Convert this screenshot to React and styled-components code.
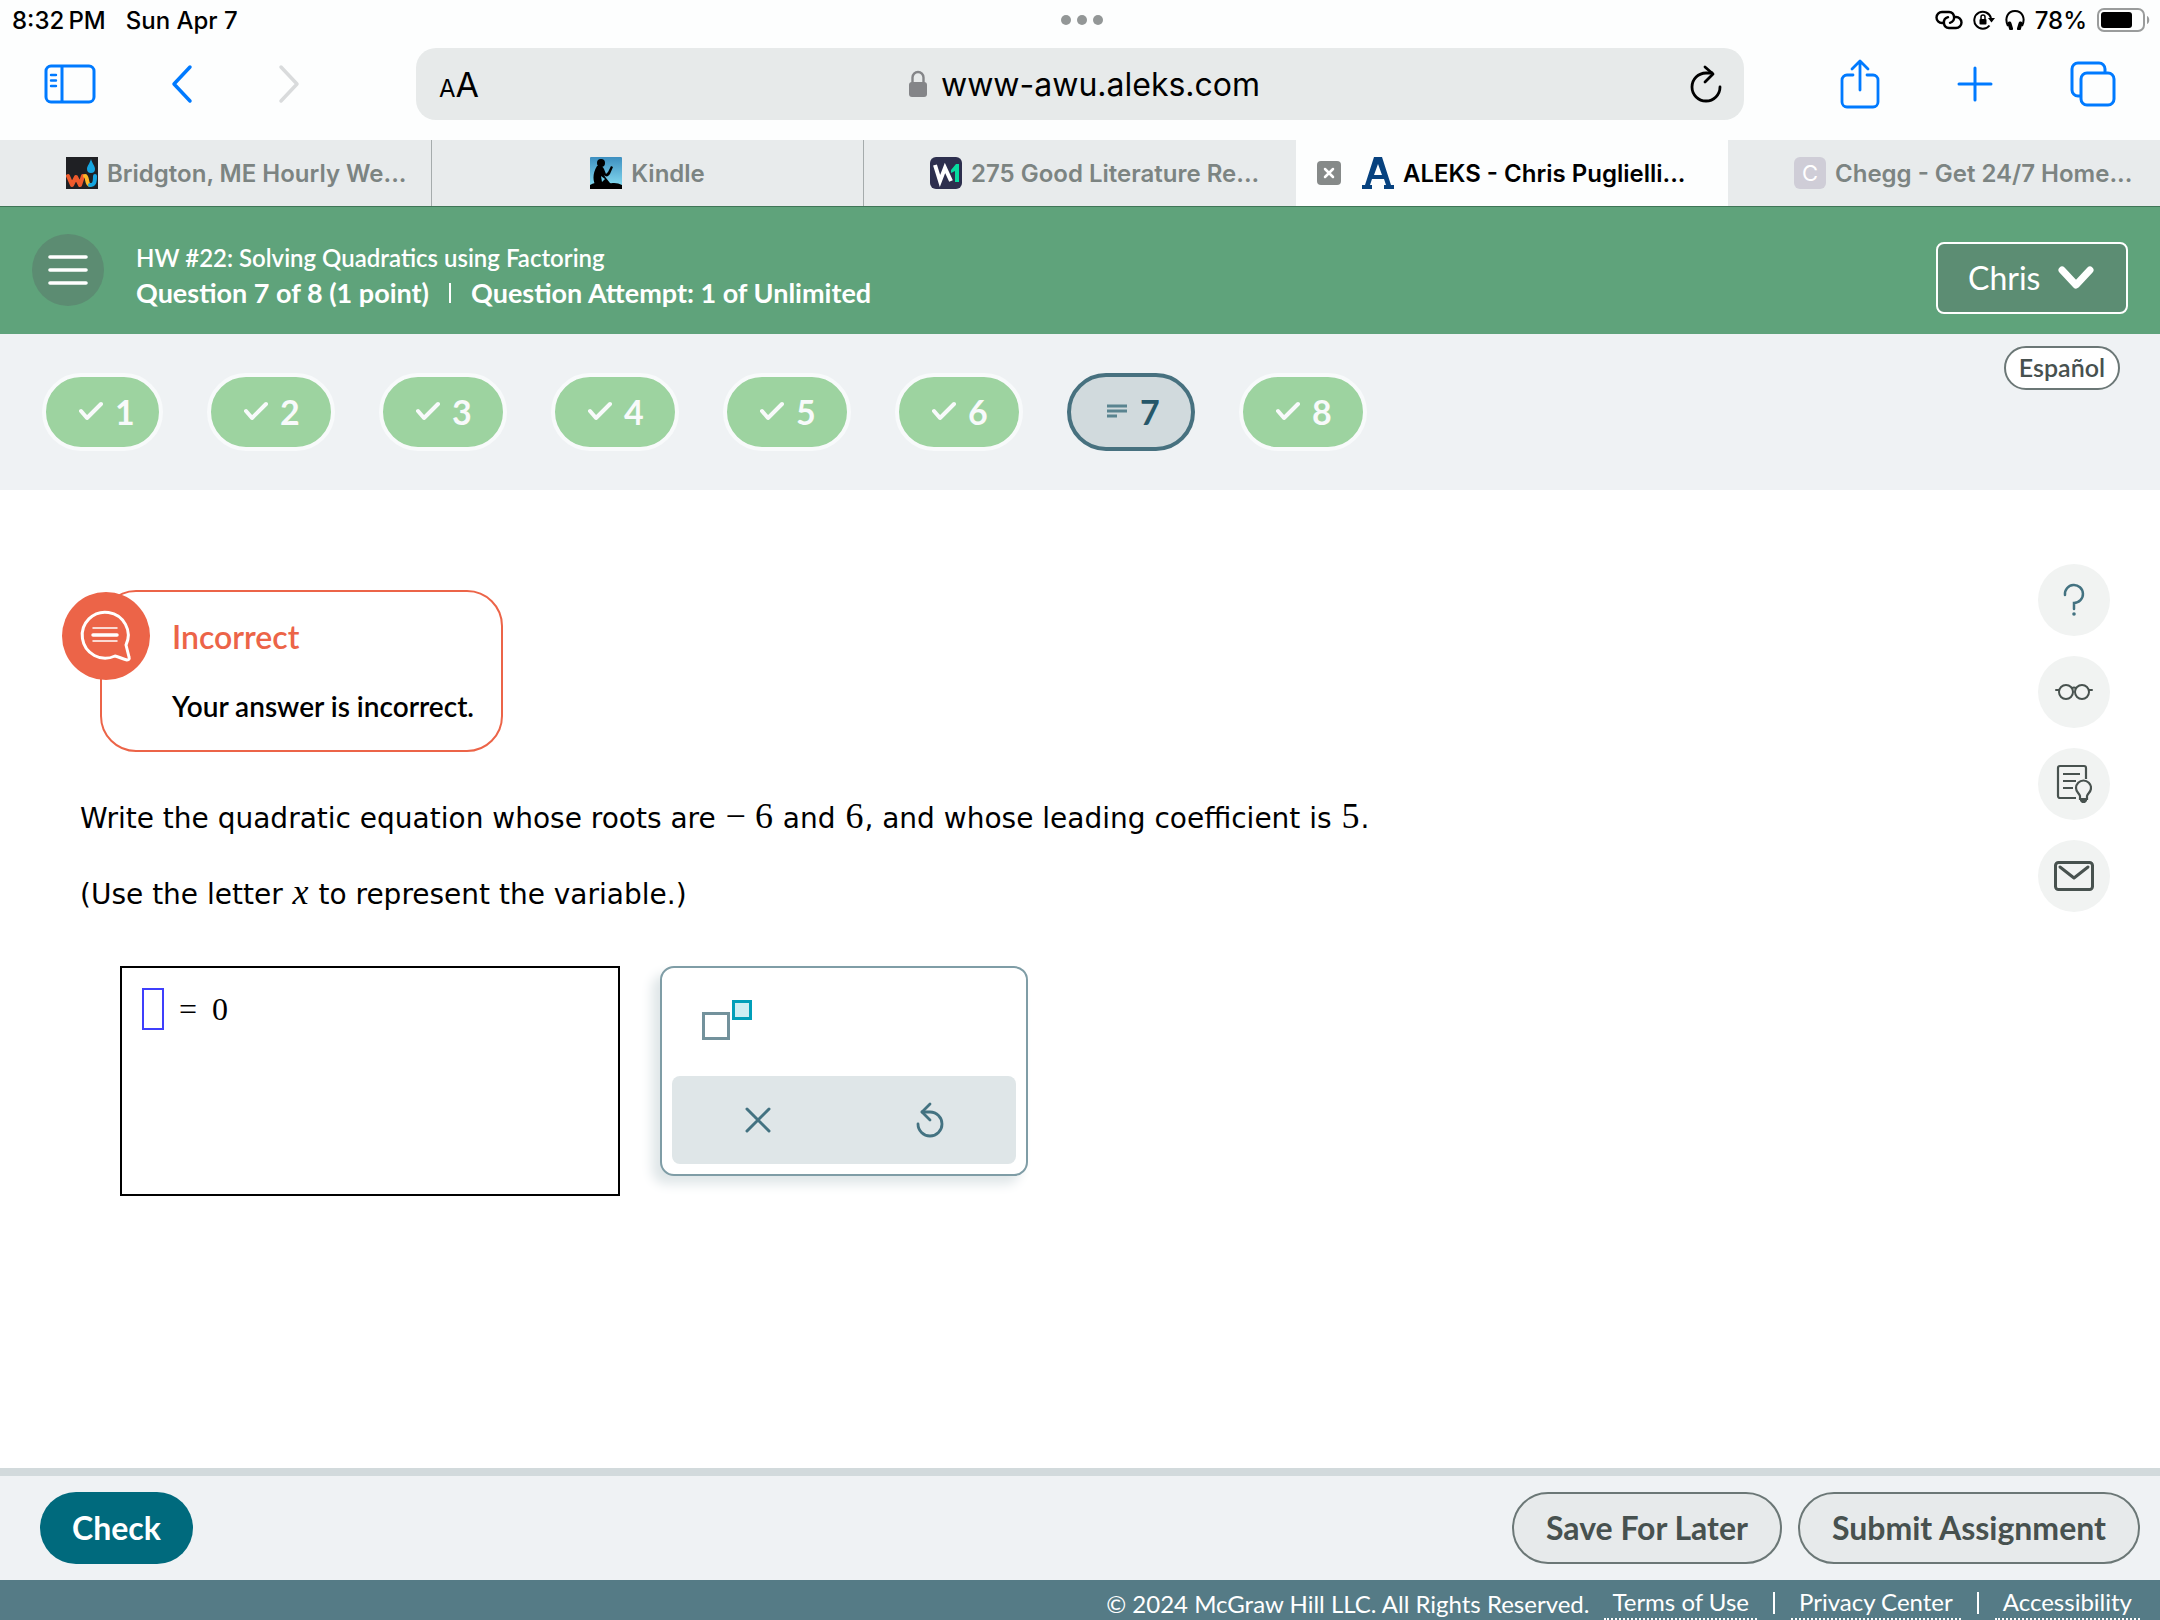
import { useState } from "react";
import styled, { createGlobalStyle, css } from "styled-components";

const questions = [1, 2, 3, 4, 5, 6, 7, 8];

const WeatherIcon = () => (
  <Favicon viewBox="0 0 32 32">
    <rect width="32" height="32" fill="#1f2024" />
    <path d="M25 2c1 4 4 7 4 10a4 4 0 0 1-8 0c0-3 3-6 4-10z" fill="#15a5e0" />
    <path d="M2 19l4 9 4-8 4 8 3-9" fill="none" stroke="#ee5a2c" strokeWidth="4" strokeLinejoin="round" strokeLinecap="round" />
    <path d="M19 19c3 0 1 9 5 9" fill="none" stroke="#fdb827" strokeWidth="4" strokeLinecap="round" />
    <path d="M24 28c4 0 5-2 5-9" fill="none" stroke="#15a5e0" strokeWidth="4" strokeLinecap="round" />
  </Favicon>
);

const KindleIcon = () => (
  <Favicon viewBox="0 0 32 32">
    <defs>
      <linearGradient id="sky" x1="0" y1="0" x2="0" y2="1">
        <stop offset="0" stopColor="#3d8fc0" />
        <stop offset="1" stopColor="#8ce2f5" />
      </linearGradient>
    </defs>
    <rect width="32" height="32" rx="1" fill="url(#sky)" />
    <path d="M0 32v-4c6-3 12-3 18-1 6-2 10-1 14 1v4z" fill="#000" />
    <circle cx="11" cy="6" r="4" fill="#000" />
    <path d="M7 9c3-1 6 0 7 3l2 5 2-2 3-6 2 1-3 7c-2 3-4 3-6 1l2 3 4 5 4 3H6c-3-4-4-12 1-20z" fill="#000" />
    <path d="M11 19l1 6 3-3z" fill="#6ccbe8" />
  </Favicon>
);

const WritersIcon = () => (
  <Favicon viewBox="0 0 32 32">
    <rect width="32" height="32" rx="6" fill="#2d2f4e" />
    <path d="M5 8l5 16 5-13 6 13" fill="none" stroke="#fff" strokeWidth="4" />
    <path d="M29 7v18h-4V14l-4 2v-3l5-6z" fill="#07dca0" />
  </Favicon>
);

const AleksIcon = () => (
  <Favicon viewBox="0 0 32 32">
    <path d="M12 0h8l9 28h3v4H22v-4h2l-2-6H10l-2 6h2v4H0v-4h3zM16 7l-4 11h8z" fill="#07427f" />
  </Favicon>
);

const tabs = [
  { title: "Bridgton, ME Hourly We...", icon: <WeatherIcon /> },
  { title: "Kindle", icon: <KindleIcon />, centered: true },
  { title: "275 Good Literature Re...", icon: <WritersIcon /> },
  { title: "ALEKS - Chris Puglielli...", icon: <AleksIcon />, active: true },
  { title: "Chegg - Get 24/7 Home...", letter: "C" },
];

const StatusBar = () => (
  <Status>
    <StatusGroup>
      <span>8:32{"\u2009"}PM</span>
      <span>Sun Apr 7</span>
    </StatusGroup>
    <Dots>
      <i />
      <i />
      <i />
    </Dots>
    <StatusIcons>
      <svg width="28" height="20" viewBox="0 0 28 20" fill="none" stroke="#000" strokeWidth="2.4" strokeLinecap="round">
        <path d="M8 13H7a5.500 5.500 0 0 1 0-11h7a5.500 5.500 0 0 1 1 10.800" />
        <path d="M20 7h1a5.500 5.500 0 0 1 0 11h-7a5.500 5.500 0 0 1-1-10.800" />
      </svg>
      <svg width="22" height="20" viewBox="0 0 22 20" fill="none">
        <path d="M16.500 15.500A8.500 8.500 0 1 1 18 8" stroke="#000" strokeWidth="2" />
        <path d="M15 8h7l-3.500 4.500z" fill="#000" />
        <rect x="6.500" y="9" width="7" height="5.500" rx="1" fill="#000" />
        <path d="M8 9V7a2 2 0 0 1 4 0v2" stroke="#000" strokeWidth="1.500" />
      </svg>
      <svg width="20" height="20" viewBox="0 0 20 20" fill="none" stroke="#000">
        <path d="M3 16C-1 8 3 1 10 1s11 7 7 15" strokeWidth="2" />
        <path d="M4.500 13.500l1.500 5M15.500 13.500l-1.500 5" strokeWidth="4" strokeLinecap="round" />
      </svg>
      <span>78%</span>
      <svg width="54" height="24" viewBox="0 0 54 24">
        <rect x="1" y="1" width="46" height="22" rx="6" fill="none" stroke="#9a9c9c" strokeWidth="2" />
        <rect x="4" y="4" width="31" height="16" rx="3" fill="#000" />
        <path d="M50 8c3 1 3 7 0 8z" fill="#9a9c9c" />
      </svg>
    </StatusIcons>
  </Status>
);

const BrowserBar = () => (
  <Toolbar>
    <NavButtons>
      <IconButton aria-label="Sidebar">
        <svg width="52" height="40" viewBox="0 0 52 40" fill="none" stroke="#007aff" strokeWidth="3">
          <rect x="2" y="2" width="48" height="36" rx="5" />
          <path d="M18 2v36" />
          <path d="M7 11h5M7 16.500h5M7 22h5" strokeWidth="2.400" strokeLinecap="round" />
        </svg>
      </IconButton>
      <IconButton aria-label="Back">
        <svg width="22" height="40" viewBox="0 0 22 40" fill="none" stroke="#007aff" strokeWidth="3.500" strokeLinecap="round" strokeLinejoin="round">
          <path d="M19 3L3 20l16 17" />
        </svg>
      </IconButton>
      <IconButton aria-label="Forward">
        <svg width="22" height="40" viewBox="0 0 22 40" fill="none" stroke="#d9dbdc" strokeWidth="3.500" strokeLinecap="round" strokeLinejoin="round">
          <path d="M3 3l16 17L3 37" />
        </svg>
      </IconButton>
    </NavButtons>
    <AddressBar>
      <TextSizeButton aria-label="Text size">
        <small>A</small>A
      </TextSizeButton>
      <AddressField>
        <svg width="18" height="28" viewBox="0 0 18 28">
          <rect y="12" width="18" height="15" rx="3" fill="#848588" />
          <path d="M3.500 13V7.500a5.500 5.500 0 0 1 11 0V13" fill="none" stroke="#848588" strokeWidth="2.400" />
        </svg>
        <AddressInput aria-label="Address" defaultValue="www-awu.aleks.com" />
      </AddressField>
      <IconButton aria-label="Reload">
        <svg width="32" height="38" viewBox="0 0 32 38" fill="none" stroke="#000" strokeWidth="2.800" strokeLinecap="round" strokeLinejoin="round">
          <path d="M30 22a14 14 0 1 1-14-14h6" />
          <path d="M15 2l8 7-8 8" />
        </svg>
      </IconButton>
    </AddressBar>
    <PageButtons>
      <IconButton aria-label="Share">
        <svg width="40" height="50" viewBox="0 0 40 50" fill="none" stroke="#007aff" strokeWidth="2.800" strokeLinecap="round" strokeLinejoin="round">
          <path d="M13 16H7a5 5 0 0 0-5 5v22a5 5 0 0 0 5 5h26a5 5 0 0 0 5-5V21a5 5 0 0 0-5-5h-6" />
          <path d="M20 31V3M12 10l8-8 8 8" />
        </svg>
      </IconButton>
      <IconButton aria-label="New tab">
        <svg width="36" height="36" viewBox="0 0 36 36" fill="none" stroke="#007aff" strokeWidth="3" strokeLinecap="round">
          <path d="M18 2v32M2 18h32" />
        </svg>
      </IconButton>
      <IconButton aria-label="Show tabs">
        <svg width="46" height="46" viewBox="0 0 46 46" fill="none" stroke="#007aff" strokeWidth="3">
          <rect x="11" y="12" width="33" height="32" rx="6" />
          <path d="M11 35H8a6 6 0 0 1-6-6V8a6 6 0 0 1 6-6h21a6 6 0 0 1 6 6v4" />
        </svg>
      </IconButton>
    </PageButtons>
  </Toolbar>
);

const CheckMark = () => (
  <svg width="24" height="20" viewBox="0 0 24 20" fill="none" stroke="#f8fafb" strokeWidth="4" strokeLinecap="round" strokeLinejoin="round">
    <path d="M2 10l6 7L22 3" />
  </svg>
);

const LinesMark = () => (
  <svg width="24" height="20" viewBox="0 0 24 20" fill="none" stroke="#5a8490" strokeWidth="3">
    <path d="M3 5h20M3 10h20M3 15h10" />
  </svg>
);

const SideTools = () => (
  <Tools>
    <ToolButton aria-label="Help">
      <svg width="24" height="34" viewBox="0 0 24 34" fill="none" stroke="#437281" strokeWidth="2.500">
        <path d="M3 12a9 9 0 1 1 9 8v6" strokeLinecap="round" />
        <circle cx="12" cy="31" r="1.800" fill="#437281" stroke="none" />
      </svg>
    </ToolButton>
    <ToolButton aria-label="Read aloud">
      <svg width="38" height="18" viewBox="0 0 38 18" fill="none" stroke="#48524f" strokeWidth="2">
        <circle cx="11" cy="9" r="7" />
        <circle cx="27" cy="9" r="7" />
        <path d="M1 7h3M34 7h3M17 5q2-1 4 0" strokeLinecap="round" />
      </svg>
    </ToolButton>
    <ToolButton aria-label="Explanation">
      <svg width="36" height="40" viewBox="0 0 36 40" fill="none" stroke="#48524f" strokeWidth="2.200">
        <path d="M20 34H4a2 2 0 0 1-2-2V4a2 2 0 0 1 2-2h24a2 2 0 0 1 2 2v11" />
        <path d="M7 10h17M7 17h13M7 24h10" />
        <path d="M24 35v-3c-1-3-4-4-4-8a7.500 7.500 0 0 1 15 0c0 4-3 5-4 8v3z" />
        <path d="M24 34h7v3l-2 2h-3l-2-2z" fill="#48524f" stroke="none" />
      </svg>
    </ToolButton>
    <ToolButton aria-label="Message">
      <svg width="40" height="30" viewBox="0 0 40 30" fill="none" stroke="#48524f" strokeWidth="3" strokeLinecap="round" strokeLinejoin="round">
        <rect x="1.500" y="1.500" width="37" height="27" rx="3" />
        <path d="M6 6l14 11L34 6" />
      </svg>
    </ToolButton>
  </Tools>
);

const App = () => {
  const [answer, setAnswer] = useState("");

  return (
    <Page>
      <GlobalStyle />
      <StatusBar />
      <BrowserBar />
      <TabStrip>
        {tabs.map((tab) => (
          <Tab key={tab.title} $active={tab.active} $centered={tab.centered}>
            {tab.active && (
              <CloseButton aria-label="Close tab">
                <svg width="12" height="12" viewBox="0 0 12 12" stroke="#fff" strokeWidth="2.500" strokeLinecap="round">
                  <path d="M2 2l8 8M10 2l-8 8" />
                </svg>
              </CloseButton>
            )}
            {tab.icon || <LetterIcon>{tab.letter}</LetterIcon>}
            <TabTitle>{tab.title}</TabTitle>
          </Tab>
        ))}
      </TabStrip>

      <Header>
        <MenuButton aria-label="Menu">
          <svg width="40" height="32" viewBox="0 0 40 32" stroke="#fff" strokeWidth="3.600" strokeLinecap="round">
            <path d="M2 3h36M2 16h36M2 29h36" />
          </svg>
        </MenuButton>
        <Heading>
          <HomeworkTitle>HW #22: Solving Quadratics using Factoring</HomeworkTitle>
          <QuestionInfo>
            <span>Question 7 of 8 (1 point)</span>
            <i />
            <span>Question Attempt: 1 of Unlimited</span>
          </QuestionInfo>
        </Heading>
        <UserButton>
          Chris
          <svg width="36" height="24" viewBox="0 0 36 24" fill="none" stroke="#fff" strokeWidth="7" strokeLinecap="round" strokeLinejoin="round">
            <path d="M4 5l14 15L32 5" />
          </svg>
        </UserButton>
      </Header>

      <QuestionBar>
        <Pills>
          {questions.map((n) => (
            <Pill key={n} $current={n === 7} $first={n === 1}>
              {n === 7 ? <LinesMark /> : <CheckMark />}
              {n}
            </Pill>
          ))}
        </Pills>
        <LanguageButton>Español</LanguageButton>
      </QuestionBar>

      <Main>
        <Problem>
          <Feedback>
            <FeedbackIcon>
              <svg width="54" height="54" viewBox="0 0 54 54" fill="none" stroke="#fff" strokeLinecap="round" strokeLinejoin="round">
                <path d="M47 36a23 23 0 1 0-11 11c4 1 8 3 12 4q3 0 2-3z" strokeWidth="3" />
                <path d="M14 19h24M14 32h24" strokeWidth="1.500" />
                <path d="M14 26h24" strokeWidth="3.500" />
              </svg>
            </FeedbackIcon>
            <FeedbackTitle>Incorrect</FeedbackTitle>
            <FeedbackText>Your answer is incorrect.</FeedbackText>
          </Feedback>

          <Paragraph>
            Write the quadratic equation whose roots are <Num>− 6</Num> and <Num>6</Num>, and whose leading coefficient
            is <Num>5</Num>.
          </Paragraph>
          <Paragraph>
            (Use the letter <Variable>x</Variable> to represent the variable.)
          </Paragraph>

          <AnswerRow>
            <AnswerBox>
              <Blank aria-label="Answer" value={answer} onChange={(e) => setAnswer(e.target.value)} />
              <span>=</span>
              <span>0</span>
            </AnswerBox>
            <Palette>
              <ExponentButton aria-label="Exponent">
                <svg width="50" height="40" viewBox="0 0 50 40">
                  <rect x="1.500" y="13.500" width="25" height="25" fill="#fff" stroke="#73929c" strokeWidth="3" />
                  <rect x="31.500" y="1.500" width="17" height="17" fill="#cceef3" stroke="#009fb9" strokeWidth="3" />
                </svg>
              </ExponentButton>
              <PaletteActions>
                <IconButton aria-label="Clear" onClick={() => setAnswer("")}>
                  <svg width="26" height="26" viewBox="0 0 26 26" stroke="#437281" strokeWidth="3" strokeLinecap="round">
                    <path d="M2 2l22 22M24 2L2 24" />
                  </svg>
                </IconButton>
                <IconButton aria-label="Undo">
                  <svg width="28" height="36" viewBox="0 0 28 36" fill="none" stroke="#437281" strokeWidth="2.800" strokeLinecap="round" strokeLinejoin="round">
                    <path d="M2 22a12 12 0 1 0 12-12H6" />
                    <path d="M14 2L6 10l8 8" />
                  </svg>
                </IconButton>
              </PaletteActions>
            </Palette>
          </AnswerRow>
        </Problem>
        <SideTools />
      </Main>

      <ActionBar>
        <CheckButton>Check</CheckButton>
        <ActionGroup>
          <OutlineButton>Save For Later</OutlineButton>
          <OutlineButton>Submit Assignment</OutlineButton>
        </ActionGroup>
      </ActionBar>
      <Footer>
        <Copyright>© 2024 McGraw Hill LLC. All Rights Reserved.</Copyright>
        <FooterLink href="#terms">Terms of Use</FooterLink>
        <Divider />
        <FooterLink href="#privacy">Privacy Center</FooterLink>
        <Divider />
        <FooterLink href="#accessibility">Accessibility</FooterLink>
      </Footer>
    </Page>
  );
};

export default App;

const GlobalStyle = createGlobalStyle`
  * {
    box-sizing: border-box;
  }

  body {
    margin: 0;
    background: #fff;
    font-family: Lato, "Open Sans", sans-serif;
  }

  button {
    border: none;
    background: none;
    padding: 0;
    color: inherit;
    font: inherit;
    cursor: pointer;
  }

  svg {
    display: block;
    flex: none;
  }

  p, h1, h2 {
    margin: 0;
  }
`;

const Page = styled.div`
  display: flex;
  flex-direction: column;
  min-height: 100vh;
`;

const Status = styled.div`
  display: grid;
  grid-template-columns: 1fr auto 1fr;
  align-items: center;
  height: 40px;
  padding: 0 9px 0 12px;
  background: #fdfefe;
  font-family: Inter, sans-serif;
  font-size: 24px;
  font-weight: 500;
`;

const StatusGroup = styled.div`
  display: flex;
  gap: 20px;
`;

const Dots = styled.div`
  display: flex;
  gap: 6px;

  i {
    width: 10px;
    height: 10px;
    border-radius: 50%;
    background: #939797;
  }
`;

const StatusIcons = styled.div`
  display: flex;
  justify-content: flex-end;
  align-items: center;
  gap: 10px;
`;

const Toolbar = styled.div`
  display: grid;
  grid-template-columns: 416fr 1328fr 416fr;
  align-items: center;
  height: 100px;
  padding: 8px 0 20px;
  background: #fdfefe;
`;

const NavButtons = styled.div`
  display: flex;
  align-items: center;
  gap: 75px;
  padding-left: 44px;

  button:last-child {
    margin-left: 10px;
  }
`;

const IconButton = styled.button`
  display: flex;
  align-items: center;
  justify-content: center;
`;

const AddressBar = styled.div`
  display: flex;
  align-items: center;
  justify-content: space-between;
  height: 72px;
  padding: 0 22px 0 23px;
  border-radius: 20px;
  background: #e7eaea;
  font-family: Inter, sans-serif;
`;

const TextSizeButton = styled.button`
  font-size: 34px;

  small {
    font-size: 24px;
  }
`;

const AddressField = styled.label`
  display: flex;
  align-items: center;
  gap: 14px;
`;

const AddressInput = styled.input`
  field-sizing: content;
  padding: 0;
  border: none;
  background: none;
  font-family: Inter, sans-serif;
  font-size: 32px;
`;

const PageButtons = styled.div`
  display: flex;
  align-items: center;
  justify-content: flex-end;
  gap: 77px;
  padding-right: 44px;
`;

const TabStrip = styled.div`
  display: grid;
  grid-template-columns: repeat(5, minmax(0, 1fr));
  height: 66px;
  background: #e8ebec;
`;

const Tab = styled.div`
  display: flex;
  min-width: 0;
  align-items: center;
  gap: 9px;
  padding-left: 66px;
  color: #7c8482;
  font-family: Inter, sans-serif;
  font-size: 24px;
  font-weight: 600;

  &:nth-child(-n + 2) {
    border-right: 1px solid #a5abac;
  }

  ${({ $centered }) =>
    $centered &&
    css`
      justify-content: center;
      padding-left: 0;
    `}

  ${({ $active }) =>
    $active &&
    css`
      padding-left: 21px;
      background: #fdfefe;
      color: #000;
    `}
`;

const TabTitle = styled.span`
  overflow: hidden;
  white-space: nowrap;
`;

const Favicon = styled.svg`
  width: 32px;
  height: 32px;
`;

const LetterIcon = styled.span`
  display: flex;
  align-items: center;
  justify-content: center;
  width: 32px;
  height: 32px;
  border-radius: 6px;
  background: #cfcdd7;
  color: #fff;
  font-size: 22px;
  font-weight: 400;
`;

const CloseButton = styled.button`
  display: flex;
  align-items: center;
  justify-content: center;
  width: 24px;
  height: 24px;
  margin-right: 12px;
  border-radius: 4px;
  background: #868a89;
`;

const Header = styled.header`
  display: flex;
  align-items: flex-start;
  height: 128px;
  padding: 27px 32px 0;
  border-top: 1px solid #3f7557;
  background: #5fa37b;
  color: #fff;
`;

const MenuButton = styled.button`
  display: flex;
  align-items: center;
  justify-content: center;
  width: 72px;
  height: 72px;
  border-radius: 50%;
  background: #5c8c72;
`;

const Heading = styled.div`
  flex: 1;
  padding: 6px 0 0 32px;
`;

const HomeworkTitle = styled.h1`
  font-size: 24px;
  font-weight: 600;
  line-height: 36px;
`;

const QuestionInfo = styled.div`
  display: flex;
  align-items: center;
  gap: 20px;
  font-size: 27px;
  font-weight: 700;
  line-height: 34px;

  i {
    width: 2px;
    height: 20px;
    background: #fff;
  }
`;

const UserButton = styled.button`
  display: flex;
  align-items: center;
  justify-content: space-between;
  width: 192px;
  height: 72px;
  margin-top: 8px;
  padding: 0 32px 2px 30px;
  border: 2px solid #fff;
  border-radius: 8px;
  background: #5c8d73;
  font-size: 32px;
`;

const QuestionBar = styled.nav`
  display: flex;
  align-items: flex-start;
  justify-content: space-between;
  height: 156px;
  padding: 12px 40px 0 42px;
  background: #eff2f4;
`;

const Pills = styled.div`
  display: flex;
  gap: 44px;
  padding-top: 27px;
`;

const Pill = styled.button`
  display: flex;
  align-items: center;
  gap: 12px;
  width: ${({ $first }) => ($first ? "121px" : "128px")};
  height: 78px;
  padding: 0 0 2px 33px;
  border: 4px solid ${({ $current }) => ($current ? "#47717f" : "#f8fafb")};
  border-radius: 39px;
  background: ${({ $current }) => ($current ? "#d1dadd" : "#9dd3a0")};
  color: ${({ $current }) => ($current ? "#265769" : "#f8fafb")};
  font-size: 34px;
  font-weight: 700;
`;

const LanguageButton = styled.button`
  height: 44px;
  padding: 0 13px 2px;
  border: 2px solid #6b7776;
  border-radius: 22px;
  background: #fff;
  color: #47514f;
  font-size: 25px;
  font-weight: 600;
`;

const Main = styled.main`
  display: flex;
  flex: 1;
  justify-content: space-between;
  padding: 74px 50px 0 80px;
`;

const Problem = styled.div`
  padding-top: 26px;
`;

const Feedback = styled.section`
  position: relative;
  width: max-content;
  min-width: 403px;
  height: 162px;
  margin-left: 20px;
  margin-bottom: 47px;
  padding: 23px 24px 0 70px;
  border: 2px solid #ec6448;
  border-radius: 36px;
`;

const FeedbackIcon = styled.div`
  position: absolute;
  top: 0;
  left: -40px;
  display: flex;
  align-items: center;
  justify-content: center;
  width: 88px;
  height: 88px;
  border-radius: 50%;
  background: #ec6448;
`;

const FeedbackTitle = styled.h2`
  color: #ec6448;
  font-size: 32px;
  font-weight: 600;
  line-height: 44px;
`;

const FeedbackText = styled.p`
  margin-top: 25px;
  font-size: 28px;
  font-weight: 600;
  line-height: 44px;
`;

const Paragraph = styled.p`
  font-family: "DejaVu Sans", sans-serif;
  font-size: 28px;
  line-height: 40px;

  & + & {
    margin-top: 36px;
  }
`;

const Num = styled.span`
  margin: 0 1px;
  font-family: "Liberation Serif", serif;
  font-size: 36px;
  line-height: 0;
`;

const Variable = styled(Num)`
  font-style: italic;
`;

const AnswerRow = styled.div`
  display: flex;
  align-items: flex-start;
  gap: 40px;
  margin: 51px 0 0 40px;
`;

const AnswerBox = styled.div`
  display: flex;
  align-items: flex-start;
  width: 500px;
  height: 230px;
  gap: 15px;
  padding: 20px;
  border: 2px solid #000;
  font-family: "Liberation Serif", serif;
  font-size: 32px;
  line-height: 42px;
`;

const Blank = styled.input`
  width: 22px;
  height: 42px;
  padding: 0;
  border: 2px solid #3f3ffc;
  font: inherit;
`;

const Palette = styled.div`
  display: flex;
  flex-direction: column;
  align-items: flex-start;
  width: 368px;
  padding: 32px 10px 10px;
  border: 2px solid #7f9da6;
  border-radius: 14px;
  background: #fff;
  box-shadow: -8px 8px 12px #dfe6e8;
`;

const ExponentButton = styled.button`
  margin: 0 0 36px 30px;
`;

const PaletteActions = styled.div`
  display: grid;
  grid-template-columns: 1fr 1fr;
  align-self: stretch;
  height: 88px;
  border-radius: 8px;
  background: #dfe6e8;
`;

const Tools = styled.aside`
  display: flex;
  flex-direction: column;
  gap: 20px;
`;

const ToolButton = styled.button`
  display: flex;
  align-items: center;
  justify-content: center;
  width: 72px;
  height: 72px;
  border-radius: 50%;
  background: #f1f3f2;
`;

const ActionBar = styled.div`
  display: flex;
  justify-content: space-between;
  padding: 16px 20px 16px 40px;
  border-top: 8px solid #d2dadc;
  background: #eff2f4;
`;

const ActionGroup = styled.div`
  display: flex;
  gap: 16px;
`;

const ActionButton = styled.button`
  height: 72px;
  padding: 0 32px 2px;
  border-radius: 36px;
  font-size: 32px;
  font-weight: 700;
`;

const CheckButton = styled(ActionButton)`
  background: #006a7d;
  color: #fff;
`;

const OutlineButton = styled(ActionButton)`
  border: 2px solid #6b7776;
  background: #e7eaeb;
  color: #47514f;
`;

const Footer = styled.footer`
  display: flex;
  align-items: flex-start;
  justify-content: flex-end;
  height: 40px;
  padding: 7px 20px 0;
  background: #557b86;
  color: #fff;
  font-size: 24px;
  line-height: 30px;
`;

const Copyright = styled.span`
  margin-right: 15px;
  padding-top: 2px;
`;

const FooterLink = styled.a`
  padding: 0 8px 1px;
  border-bottom: 2px dotted #fff;
  color: #fff;
  text-decoration: none;
`;

const Divider = styled.i`
  width: 2px;
  height: 22px;
  margin: 5px 16px 0;
  background: #fff;
`;
